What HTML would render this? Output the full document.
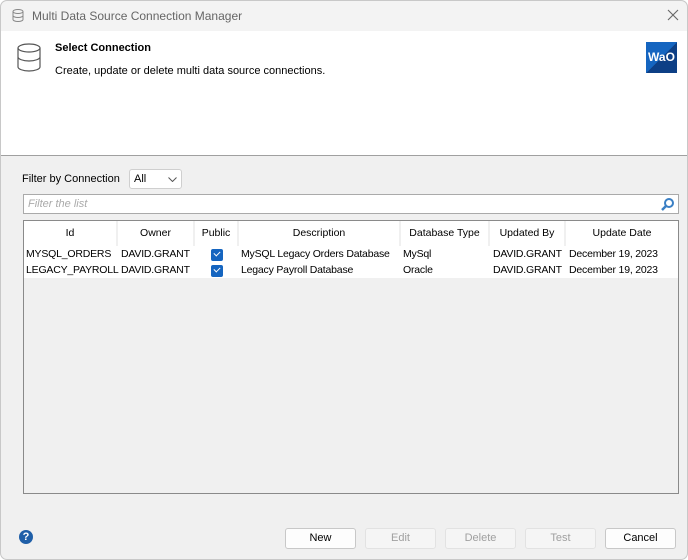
<!DOCTYPE html><html><head><style>
*{box-sizing:border-box;margin:0;padding:0}
body{width:688px;height:560px;font-family:"Liberation Sans",sans-serif;font-size:11px;color:#000;background:#fff;position:relative;overflow:hidden}
.win{position:absolute;left:0;top:0;width:688px;height:560px;border-radius:7px;background:#f0f0f0;overflow:hidden}
.frame{position:absolute;left:0;top:0;width:688px;height:560px;border:1px solid #c8c8c8;border-radius:7px}
.tb{position:absolute;left:0;top:0;width:688px;height:31px;background:#f3f3f3;color:#666;font-size:12px}
.hd{position:absolute;left:0;top:31px;width:688px;height:125px;background:#fff;border-bottom:1px solid #a0a0a0}
.abs{position:absolute}
.btn{position:absolute;top:528px;width:71px;height:21px;border:1px solid #c8c8c8;border-radius:3px;background:#fdfdfd;text-align:center;line-height:19px;font-size:11px}
.dis{color:#a0a0a0;background:#f5f5f5;border-color:#e2e2e2}
.grid{position:absolute;left:23px;top:220px;width:656px;height:274px;border:1px solid #8a8a8a;background:#f0f0f0;font-size:10.5px}
.th{position:absolute;top:0;height:25px;background:#fff;border-right:2px solid #f0f0f0;text-align:center;line-height:25px}
.row{position:absolute;left:0;width:654px;height:16px;background:#fff;line-height:17px}
.c{position:absolute;top:0;white-space:nowrap;letter-spacing:-0.2px}
.cb{position:absolute;top:3px;width:12px;height:12px;background:#1565c0;border-radius:2px}
.cb::after{content:"";position:absolute;left:3px;top:2px;width:5px;height:3px;border-left:1.3px solid #fff;border-bottom:1.3px solid #fff;transform:rotate(-45deg)}
</style></head><body><div class="win">
<div class="tb">
<svg class="abs" style="left:12px;top:9px" width="12" height="13" viewBox="0 0 12 13"><ellipse cx="6" cy="2.5" rx="5" ry="2" fill="none" stroke="#888"/><path d="M1 2.5v8c0 1 2 2 5 2s5-1 5-2v-8M1 6.5c0 1 2 2 5 2s5-1 5-2" fill="none" stroke="#888"/></svg>
<div class="abs" style="left:32px;top:9px">Multi Data Source Connection Manager</div>
<svg class="abs" style="left:667px;top:9px" width="12" height="12"><path d="M1 1L11 11M11 1L1 11" stroke="#666" stroke-width="1.1"/></svg>
</div>
<div class="hd">
<svg class="abs" style="left:16px;top:12px" width="26" height="30" viewBox="0 0 26 30"><ellipse cx="13" cy="5" rx="11" ry="4" fill="none" stroke="#555" stroke-width="1.2"/><path d="M2 5v19c0 2 5 4 11 4s11-2 11-4V5M2 14c0 2 5 4 11 4s11-2 11-4" fill="none" stroke="#555" stroke-width="1.2"/></svg>
<div class="abs" style="left:55px;top:11px;font-weight:bold">Select Connection</div>
<div class="abs" style="left:55px;top:34px">Create, update or delete multi data source connections.</div>
<div class="abs" style="left:646px;top:11px;width:31px;height:31px;background:linear-gradient(135deg,#1565c0 50%,#0d3f85 50%);color:#fff;font-weight:bold;font-size:12px;text-align:center;line-height:31px">WaO</div>
</div>
<div class="abs" style="left:22px;top:173px">Filter by Connection</div>
<div class="abs" style="left:129px;top:169px;width:53px;height:20px;border:1px solid #cfcfcf;border-radius:3px;background:#fff;padding-left:4px;line-height:18px">All<svg class="abs" style="left:38px;top:7px" width="9" height="5"><path d="M0.5 0.5L4.5 4.5L8.5 0.5" fill="none" stroke="#555"/></svg></div>
<div class="abs" style="left:23px;top:194px;width:656px;height:20px;border:1px solid #aaa;background:#fff;color:#aaa;font-style:italic;padding-left:4px;line-height:19px">Filter the list
<svg class="abs" style="left:637px;top:2px" width="14" height="14"><circle cx="8" cy="6" r="4" fill="none" stroke="#3a7fc4" stroke-width="2"/><path d="M5 9L1 13" stroke="#3a7fc4" stroke-width="2.5"/></svg></div>
<div class="grid">
<div class="th" style="left:0;width:94px">Id</div>
<div class="th" style="left:94px;width:77px">Owner</div>
<div class="th" style="left:171px;width:44px">Public</div>
<div class="th" style="left:215px;width:162px">Description</div>
<div class="th" style="left:377px;width:89px">Database Type</div>
<div class="th" style="left:466px;width:76px">Updated By</div>
<div class="th" style="left:542px;width:112px;border-right:none">Update Date</div>
<div class="row" style="top:25px"><span class="c" style="left:2px">MYSQL_ORDERS</span><span class="c" style="left:97px">DAVID.GRANT</span><span class="cb" style="left:187px"></span><span class="c" style="left:217px">MySQL Legacy Orders Database</span><span class="c" style="left:379px">MySql</span><span class="c" style="left:469px">DAVID.GRANT</span><span class="c" style="left:545px">December 19, 2023</span></div>
<div class="row" style="top:41px"><span class="c" style="left:2px">LEGACY_PAYROLL</span><span class="c" style="left:97px">DAVID.GRANT</span><span class="cb" style="left:187px"></span><span class="c" style="left:217px">Legacy Payroll Database</span><span class="c" style="left:379px">Oracle</span><span class="c" style="left:469px">DAVID.GRANT</span><span class="c" style="left:545px">December 19, 2023</span></div>
</div>
<div class="abs" style="left:19px;top:530px;width:14px;height:14px;border-radius:50%;background:#1f5fa8;color:#fff;font-weight:bold;font-size:11px;text-align:center;line-height:14px">?</div>
<div class="btn" style="left:285px">New</div>
<div class="btn dis" style="left:365px">Edit</div>
<div class="btn dis" style="left:445px">Delete</div>
<div class="btn dis" style="left:525px">Test</div>
<div class="btn" style="left:605px">Cancel</div>
</div>
<div class="frame"></div>
</body></html>
